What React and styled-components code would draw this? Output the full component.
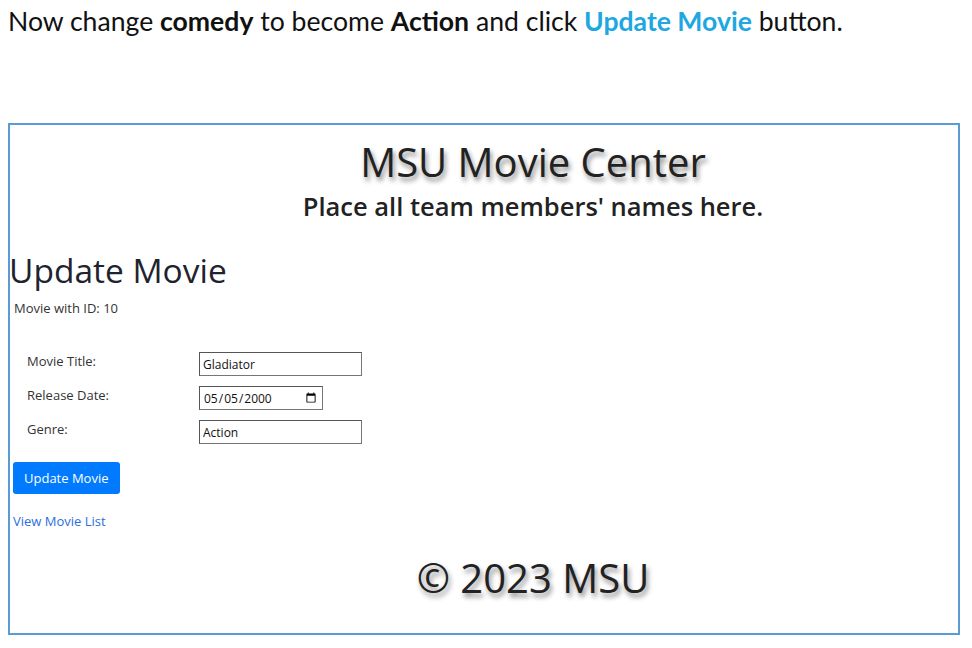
import styled, { createGlobalStyle } from "styled-components";

const GlobalStyle = createGlobalStyle`
  html, body {
    margin: 0;
    padding: 0;
    background: #fff;
  }
  body {
    font-family: "Open Sans", "Noto Sans", sans-serif;
    color: #212529;
  }
`;

const Page = styled.div`
  width: 972px;
  height: 648px;
  overflow: hidden;
  display: flex;
  flex-direction: column;
`;

const Instruction = styled.p`
  margin: 5px 0 0 8px;
  font-family: "Lato", "Open Sans", sans-serif;
  font-size: 26.6px;
  line-height: 32px;
  color: #111;
  white-space: nowrap;
  b {
    font-weight: 700;
  }
`;

const Highlight = styled.b`
  color: #1ea7e1;
`;

const Frame = styled.div`
  margin: 86px 0 0 8px;
  width: 948px;
  height: 508px;
  border: 2px solid #5b9bd5;
  display: flex;
  flex-direction: column;
`;

const Header = styled.header`
  padding: 12px 0 0 98px;
  text-align: center;
`;

const SiteTitle = styled.h1`
  margin: 0;
  font-size: 40px;
  font-weight: 400;
  line-height: 50px;
  color: #222;
  text-shadow: 2px 4px 5px rgba(0, 0, 0, 0.45);
`;

const Team = styled.h2`
  margin: 2px 0 0;
  font-size: 25.5px;
  font-weight: 600;
  line-height: 34px;
  color: #222;
`;

const Main = styled.main`
  padding: 24px 0 0 0;
  display: flex;
  flex-direction: column;
  align-items: flex-start;
`;

const PageTitle = styled.h1`
  margin: 0 0 0 -1px;
  font-size: 33.5px;
  font-weight: 400;
  line-height: 46px;
  color: #1f2330;
`;

const IdLine = styled.p`
  margin: 5px 0 0 4px;
  font-size: 13px;
  line-height: 20px;
  color: #333;
`;

const Form = styled.form`
  display: flex;
  flex-direction: column;
  align-items: flex-start;
  padding: 34px 0 0 3px;
`;

const FieldGrid = styled.div`
  display: grid;
  grid-template-columns: 172px auto;
  row-gap: 10px;
  padding-left: 14px;
  align-items: center;
`;

const Label = styled.label`
  font-size: 13px;
  color: #333;
  margin-top: -6px;
`;

const Input = styled.input`
  box-sizing: border-box;
  width: ${(p) => p.$w || 163}px;
  height: 24px;
  border: 1px solid #767676;
  border-top-color: #555;
  border-left-color: #555;
  padding: 1px 3px;
  font-family: "Open Sans", sans-serif;
  font-size: 12px;
  color: #111;
  background: #fff;
`;

const Button = styled.button`
  margin-top: 18px;
  height: 32px;
  padding: 0 11px;
  border: none;
  border-radius: 3px;
  background: #007bff;
  color: #fff;
  font-family: "Open Sans", sans-serif;
  font-size: 13px;
`;

const Link = styled.a`
  margin-top: 18px;
  font-size: 13px;
  color: #2a6fe0;
  text-decoration: none;
`;

const Footer = styled.footer`
  padding: 23px 0 0 98px;
  text-align: center;
  font-size: 40px;
  line-height: 50px;
  color: #222;
  text-shadow: 2px 4px 5px rgba(0, 0, 0, 0.45);
`;

export default function App() {
  return (
    <>
      <GlobalStyle />
      <Page>
        <Instruction>
          Now change <b>comedy</b> to become <b>Action</b> and click{" "}
          <Highlight>Update Movie</Highlight> button.
        </Instruction>
        <Frame>
          <Header>
            <SiteTitle>MSU Movie Center</SiteTitle>
            <Team>Place all team members' names here.</Team>
          </Header>
          <Main>
            <PageTitle>Update Movie</PageTitle>
            <IdLine>Movie with ID: 10</IdLine>
            <Form onSubmit={(e) => e.preventDefault()}>
              <FieldGrid>
                <Label htmlFor="title">Movie Title:</Label>
                <Input id="title" defaultValue="Gladiator" />
                <Label htmlFor="date">Release Date:</Label>
                <Input id="date" type="date" $w={124} defaultValue="2000-05-05" />
                <Label htmlFor="genre">Genre:</Label>
                <Input id="genre" defaultValue="Action" />
              </FieldGrid>
              <Button type="submit">Update Movie</Button>
              <Link href="#">View Movie List</Link>
            </Form>
          </Main>
          <Footer>© 2023 MSU</Footer>
        </Frame>
      </Page>
    </>
  );
}
